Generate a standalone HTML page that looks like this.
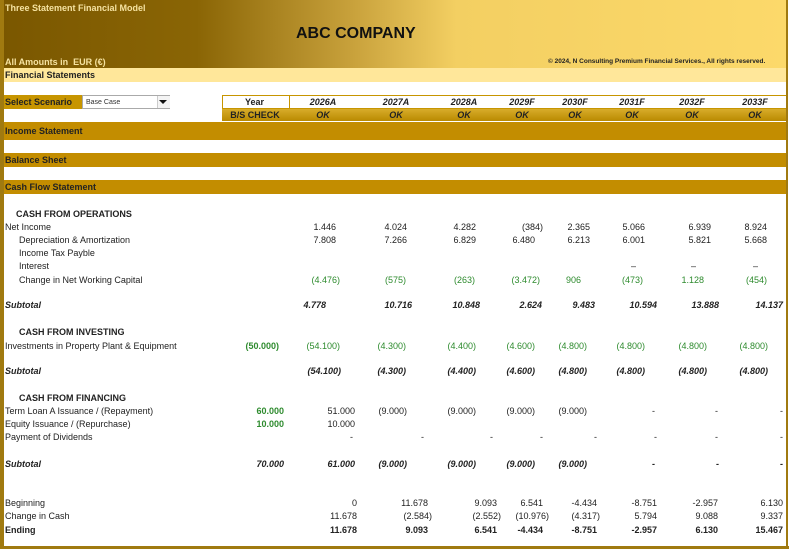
<!DOCTYPE html><html><head><meta charset="utf-8"><style>
body{margin:0;width:794px;height:559px;background:#fff;position:relative;overflow:hidden;font-family:"Liberation Sans",sans-serif;font-size:9px;color:#222}
div{position:absolute;white-space:nowrap}
.t{transform:translateY(-50%)}
.g{color:#2e8b2e}.b{font-weight:bold}.i{font-style:italic}
</style></head><body>
<div style="left:0;top:0;width:787px;height:68px;background:linear-gradient(90deg,#7a5700 0%,#8a6505 25%,#c9a23c 45%,#f3cf62 58%,#fcd96a 100%)"></div>
<div style="left:0;top:68px;width:787px;height:14px;background:#ffe79a"></div>
<div style="left:5px;top:3px;color:#f5e2a0;font-weight:bold;font-size:9px">Three Statement Financial Model</div>
<div style="left:296px;top:25px;font-weight:bold;font-size:16px;color:#111">ABC COMPANY</div>
<div style="left:5px;top:57px;color:#f5e2a0;font-weight:bold;font-size:9px">All Amounts in &nbsp;EUR (€)</div>
<div style="left:548px;top:58px;font-weight:bold;font-size:6.5px;color:#222">© 2024, N Consulting Premium Financial Services., All rights reserved.</div>
<div style="left:5px;top:70px;font-weight:bold">Financial Statements</div>
<div style="left:0;top:95px;width:82px;height:14px;background:#c79500"></div>
<div style="left:5px;top:97px;font-weight:bold">Select Scenario</div>
<div style="left:82px;top:95px;width:88px;height:14px;border:1px solid #aaa;box-sizing:border-box;background:#fff;font-size:7px;padding:3px 3px;color:#333">Base Case</div>
<div style="left:157px;top:96px;width:12px;height:12px;border-left:1px solid #ccc;background:#f4f4f4"></div>
<div style="left:159px;top:100px;width:0;height:0;border-left:4px solid transparent;border-right:4px solid transparent;border-top:4px solid #111"></div>
<div style="left:222px;top:95px;width:565px;height:14px;border:1px solid #c79500;box-sizing:border-box;background:#fff"></div>
<div style="left:289px;top:95px;width:1px;height:14px;background:#c79500"></div>
<div style="left:222px;top:109px;width:565px;height:12px;background:linear-gradient(#d8ac2a,#b98a00)"></div>
<div style="left:0;top:122px;width:787px;height:18px;background:#c38d00"></div>
<div style="left:0;top:153px;width:787px;height:14px;background:#c38d00"></div>
<div style="left:0;top:180px;width:787px;height:14px;background:#c38d00"></div>
<div style="left:5px;top:126px;font-weight:bold">Income Statement</div>
<div style="left:5px;top:155px;font-weight:bold">Balance Sheet</div>
<div style="left:5px;top:182px;font-weight:bold">Cash Flow Statement</div>
<div style="left:0;top:0;width:4px;height:549px;background:#a07a10"></div>
<div style="left:0;top:546px;width:789px;height:3px;background:#a07a10"></div>
<div style="left:786px;top:0;width:2px;height:549px;background:#a07a10"></div>
<div id="c"></div>
<script>
var h='';
function T(x,y,s,c,center){h+='<div class="t '+(c||'')+'" style="'+(center?'left:'+x+'px;transform:translate(-50%,-50%)':'right:'+(794-x)+'px')+';top:'+y+'px">'+s+'</div>';}
function L(x,y,s,c){h+='<div class="t '+(c||'')+'" style="left:'+x+'px;top:'+y+'px">'+s+'</div>';}
L(245,102,'Year','b');
[[323,'2026A'],[396,'2027A'],[464,'2028A'],[522,'2029F'],[575,'2030F'],[632,'2031F'],[692,'2032F'],[755,'2033F']].forEach(function(a){T(a[0],102,a[1],'b i',1);T(a[0],115,'OK','b i',1);});
T(255,115,'B/S CHECK','b',1);
L(16,214,'CASH FROM OPERATIONS','b');
L(5,227,'Net Income');L(19,240,'Depreciation &amp; Amortization');L(19,253,'Income Tax Payble');L(19,266,'Interest');L(19,280,'Change in Net Working Capital');
L(5,305,'Subtotal','b i');L(19,332,'CASH FROM INVESTING','b');L(5,346,'Investments in Property Plant &amp; Equipment');L(5,371,'Subtotal','b i');
L(19,398,'CASH FROM FINANCING','b');L(5,411,'Term Loan A Issuance / (Repayment)');L(5,424,'Equity Issuance / (Repurchase)');L(5,437,'Payment of Dividends');L(5,464,'Subtotal','b i');
L(5,503,'Beginning');L(5,516,'Change in Cash');L(5,530,'Ending','b');
function R(y,arr,c){arr.forEach(function(a){if(a)T(a[0],y,a[1],c);});}
R(227,[[336,'1.446'],[407,'4.024'],[476,'4.282'],[543,'(384)'],[590,'2.365'],[645,'5.066'],[711,'6.939'],[767,'8.924']]);
R(240,[[336,'7.808'],[407,'7.266'],[476,'6.829'],[535,'6.480'],[590,'6.213'],[645,'6.001'],[711,'5.821'],[767,'5.668']]);
R(266,[[636,'–'],[696,'–'],[758,'–']]);
R(280,[[340,'(4.476)'],[406,'(575)'],[475,'(263)'],[540,'(3.472)'],[581,'906'],[643,'(473)'],[704,'1.128'],[767,'(454)']],'g');
R(305,[[326,'4.778'],[412,'10.716'],[480,'10.848'],[542,'2.624'],[595,'9.483'],[657,'10.594'],[719,'13.888'],[783,'14.137']],'b i');
R(346,[[279,'(50.000)']],'g b');
R(346,[[340,'(54.100)'],[406,'(4.300)'],[476,'(4.400)'],[535,'(4.600)'],[587,'(4.800)'],[645,'(4.800)'],[707,'(4.800)'],[768,'(4.800)']],'g');
R(371,[[341,'(54.100)'],[406,'(4.300)'],[476,'(4.400)'],[535,'(4.600)'],[587,'(4.800)'],[645,'(4.800)'],[707,'(4.800)'],[768,'(4.800)']],'b i');
R(411,[[284,'60.000'],[424,'10.000']].slice(0,1),'g b');
R(424,[[284,'10.000']],'g b');
R(411,[[355,'51.000'],[407,'(9.000)'],[476,'(9.000)'],[535,'(9.000)'],[587,'(9.000)'],[655,'-'],[718,'-'],[783,'-']]);
R(424,[[355,'10.000']]);
R(437,[[353,'-'],[424,'-'],[493,'-'],[543,'-'],[597,'-'],[657,'-'],[718,'-'],[783,'-']]);
R(464,[[284,'70.000'],[355,'61.000'],[407,'(9.000)'],[476,'(9.000)'],[535,'(9.000)'],[587,'(9.000)'],[655,'-'],[719,'-'],[783,'-']],'b i');
R(503,[[357,'0'],[428,'11.678'],[497,'9.093'],[543,'6.541'],[597,'-4.434'],[657,'-8.751'],[718,'-2.957'],[783,'6.130']]);
R(516,[[357,'11.678'],[432,'(2.584)'],[501,'(2.552)'],[549,'(10.976)'],[600,'(4.317)'],[657,'5.794'],[718,'9.088'],[783,'9.337']]);
R(530,[[357,'11.678'],[428,'9.093'],[497,'6.541'],[543,'-4.434'],[597,'-8.751'],[657,'-2.957'],[718,'6.130'],[783,'15.467']],'b');
document.getElementById('c').outerHTML=h;
</script>
</body></html>
